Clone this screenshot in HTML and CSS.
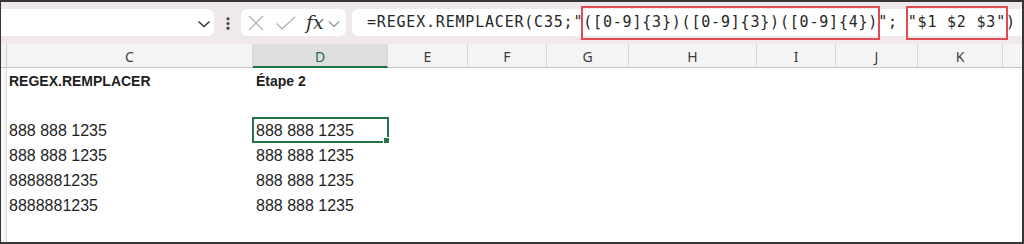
FILE: index.html
```html
<!DOCTYPE html>
<html lang="fr">
<head>
<meta charset="utf-8">
<title>REGEX.REMPLACER</title>
<link rel="stylesheet" href="styles.css">
</head>
<body>
<div class="frame">
  <div class="toolbar">
    <div class="namebox">
      <svg class="nb-chev" width="14" height="8" viewBox="0 0 14 8"><polyline points="1.5,1.5 7,6.5 12.5,1.5" fill="none" stroke="#3a3a3a" stroke-width="1.6"/></svg>
    </div>
    <svg class="dots" width="4" height="13" viewBox="0 0 4 13"><circle cx="2" cy="1.8" r="1.6" fill="#444"/><circle cx="2" cy="6.5" r="1.6" fill="#444"/><circle cx="2" cy="11.2" r="1.6" fill="#444"/></svg>
    <div class="fxbox">
      <svg class="ic-x" width="16" height="16" viewBox="0 0 16 16"><path d="M1 1 L15 15 M15 1 L1 15" stroke="#b3b3b3" stroke-width="1.3" fill="none"/></svg>
      <svg class="ic-check" width="20" height="14" viewBox="0 0 20 14"><polyline points="0.8,7.5 6,12.8 19.3,0.8" stroke="#b3b3b3" stroke-width="1.3" fill="none"/></svg>
      <span class="fx">fx</span>
      <svg class="fx-chev" width="12" height="8" viewBox="0 0 12 8"><polyline points="1,1.5 6,6.5 11,1.5" fill="none" stroke="#9a9a9a" stroke-width="1.3"/></svg>
    </div>
    <div class="formula">=REGEX.REMPLACER(C35;"<span class="mark">([0-9]{3})([0-9]{3})([0-9]{4})</span>"; <span class="mark">"$1 $2 $3"</span>)</div>
  </div>
  <div class="sheet">
    <div class="corner"></div>
    <div class="ch">C</div>
    <div class="ch ch-active">D</div>
    <div class="ch">E</div>
    <div class="ch">F</div>
    <div class="ch">G</div>
    <div class="ch">H</div>
    <div class="ch">I</div>
    <div class="ch">J</div>
    <div class="ch">K</div>
    <div class="ch ch-last"></div>

    <div class="rh"></div><div class="cell bold">REGEX.REMPLACER</div><div class="cell cell-d bold">Étape 2</div><div class="cell span-rest"></div>
    <div class="rh"></div><div class="cell"></div><div class="cell cell-d"></div><div class="cell span-rest"></div>
    <div class="rh"></div><div class="cell">888 888 1235</div><div class="cell cell-d selected">888 888 1235</div><div class="cell span-rest"></div>
    <div class="rh"></div><div class="cell">888 888 1235</div><div class="cell cell-d">888 888 1235</div><div class="cell span-rest"></div>
    <div class="rh"></div><div class="cell">8888881235</div><div class="cell cell-d">888 888 1235</div><div class="cell span-rest"></div>
    <div class="rh"></div><div class="cell">8888881235</div><div class="cell cell-d">888 888 1235</div><div class="cell span-rest"></div>
    <div class="rh"></div><div class="cell"></div><div class="cell cell-d"></div><div class="cell span-rest"></div>
  </div>
</div>
</body>
</html>
```

FILE: styles.css
```css
html, body {
  margin: 0;
  padding: 0;
  background: #ffffff;
}

.frame {
  width: 1024px;
  height: 244px;
  box-sizing: border-box;
  border: 2px solid #363636;
  border-left-width: 1px;
  background: #ffffff;
  overflow: hidden;
  display: flex;
  flex-direction: column;
}

/* ---------- formula bar ---------- */
.toolbar {
  height: 42px;
  flex: none;
  box-sizing: border-box;
  padding-top: 7px;
  background: #efe9ee;
  display: flex;
  align-items: flex-start;
}

.namebox {
  width: 213px;
  height: 27px;
  background: #ffffff;
  border-radius: 0 6px 6px 0;
  display: flex;
  align-items: center;
  justify-content: flex-end;
  padding-right: 3px;
  box-sizing: border-box;
}
.nb-chev { margin-top: 2px; }

.dots {
  margin-left: 12px;
  margin-top: 8px;
}

.fxbox {
  margin-left: 11px;
  width: 105px;
  height: 27px;
  background: #ffffff;
  border-radius: 6px;
  display: flex;
  align-items: center;
  box-sizing: border-box;
  padding-left: 7px;
}
.ic-x { margin-top: 1px; }
.ic-check { margin-left: 12px; margin-top: 1px; }
.fx {
  margin-left: 10px;
  font-family: "DejaVu Serif", "Liberation Serif", serif;
  font-style: italic;
  font-size: 19px;
  line-height: 20px;
  color: #2e2e2e;
  margin-top: -1px;
}
.fx-chev { margin-left: 4px; margin-top: 2px; }

.formula {
  margin-left: 6px;
  flex: 1;
  height: 27px;
  background: #ffffff;
  border-radius: 6px 0 0 6px;
  box-sizing: border-box;
  padding-left: 15px;
  font-family: "DejaVu Sans Mono", "Liberation Mono", monospace;
  font-size: 15px;
  letter-spacing: 0.8px;
  line-height: 27px;
  color: #262626;
  white-space: pre;
}
.mark {
  outline: 2px solid #e04a51;
  padding: 5px 0 7px 0;
}

/* ---------- sheet ---------- */
.sheet {
  flex: 1;
  display: grid;
  grid-template-columns: 6px 246px 135px 80px 79px 82px 128px 79px 82px 85px 1fr;
  grid-template-rows: 24px repeat(7, 25px);
  font-family: "Liberation Sans", Arial, sans-serif;
}

.corner {
  background: #f2f2f2;
  border-right: 1px solid #cfcfcf;
  border-bottom: 1px solid #c4c4c4;
}
.ch {
  background: #f4f4f4;
  border-right: 1px solid #d6d6d6;
  border-bottom: 1px solid #c4c4c4;
  font-family: "Noto Sans", "Open Sans", sans-serif;
  font-size: 14px;
  line-height: 23px;
  padding-top: 1px;
  box-sizing: border-box;
  text-align: center;
  color: #3c3c3c;
}
.ch-active {
  background: #dedede;
  color: #1f6e43;
  border-bottom: 2px solid #1f7246;
}
.ch-last { border-right: none; }

.rh {
  background: #f7f7f7;
  border-right: 1px solid #d9d9d9;
}
.cell {
  font-size: 16px;
  line-height: 25px;
  padding-left: 2px;
  color: #1f1f1f;
  white-space: nowrap;
}
.cell-d { padding-left: 3px; }
.span-rest { grid-column: 4 / -1; }
.bold {
  font-weight: bold;
  font-size: 14px;
  line-height: 23px;
  padding-top: 2px;
}

.selected {
  position: relative;
}
.selected::before {
  content: "";
  position: absolute;
  left: -1px;
  top: -1px;
  right: -1px;
  bottom: 0;
  border: 2px solid #227448;
}
.selected::after {
  content: "";
  position: absolute;
  right: -2px;
  bottom: -1px;
  width: 5px;
  height: 5px;
  background: #227448;
  border: 1px solid #ffffff;
}
```
